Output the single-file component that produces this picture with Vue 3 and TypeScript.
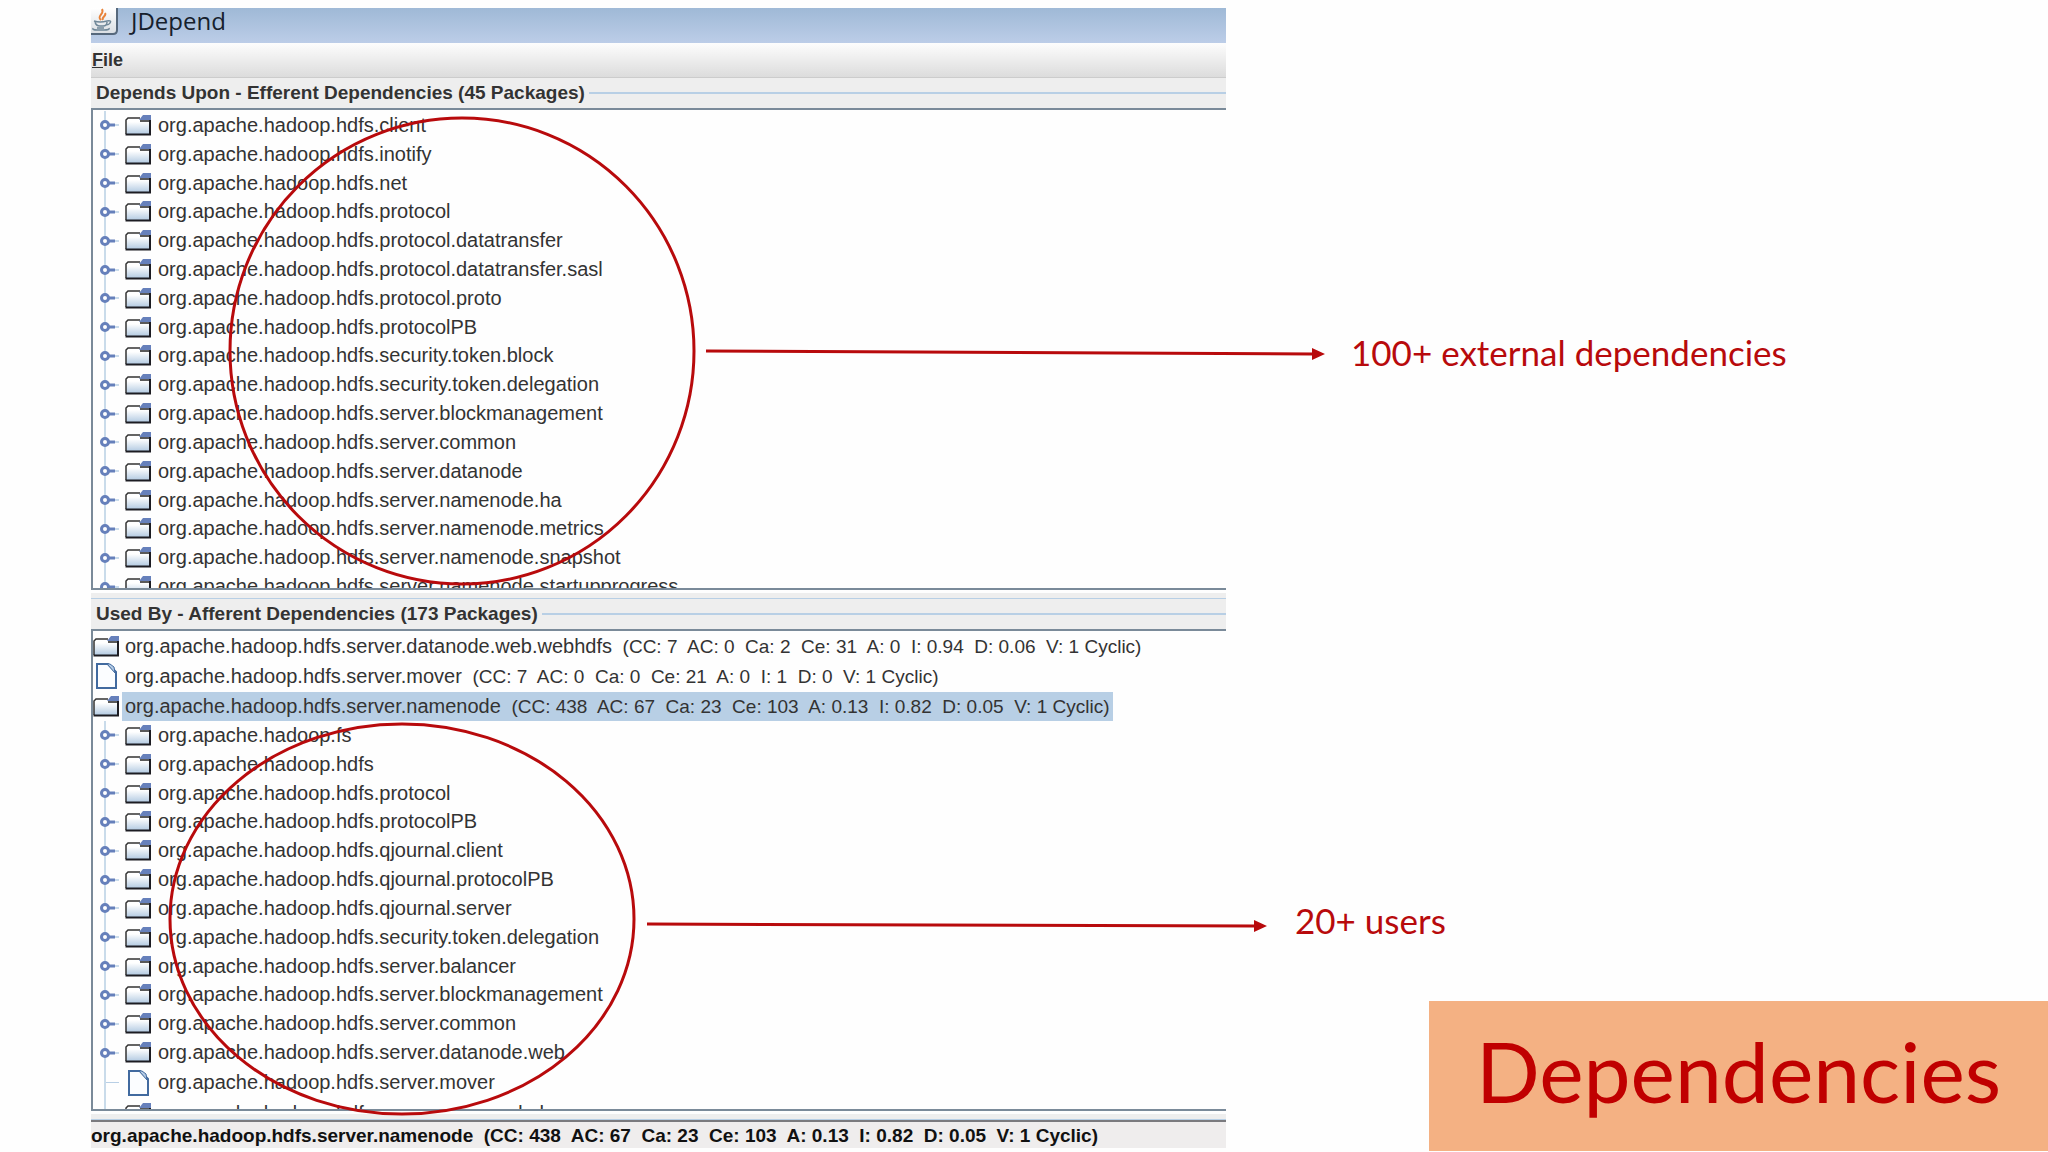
<script setup lang="ts">
interface TreeRow {
  name: string
  kind: 'folder' | 'file'
}

interface PackageRow extends TreeRow {
  metrics: string
}

const prefix = 'org.apache.hadoop.'

const folders = (names: string[]): TreeRow[] =>
  names.map((n) => ({ name: prefix + n, kind: 'folder' }))

const efferent: TreeRow[] = folders([
  'hdfs.client',
  'hdfs.inotify',
  'hdfs.net',
  'hdfs.protocol',
  'hdfs.protocol.datatransfer',
  'hdfs.protocol.datatransfer.sasl',
  'hdfs.protocol.proto',
  'hdfs.protocolPB',
  'hdfs.security.token.block',
  'hdfs.security.token.delegation',
  'hdfs.server.blockmanagement',
  'hdfs.server.common',
  'hdfs.server.datanode',
  'hdfs.server.namenode.ha',
  'hdfs.server.namenode.metrics',
  'hdfs.server.namenode.snapshot',
  'hdfs.server.namenode.startupprogress',
])

const selected: PackageRow = {
  name: prefix + 'hdfs.server.namenode',
  metrics: '  (CC: 438  AC: 67  Ca: 23  Ce: 103  A: 0.13  I: 0.82  D: 0.05  V: 1 Cyclic)',
  kind: 'folder',
}

const packages: PackageRow[] = [
  {
    name: prefix + 'hdfs.server.datanode.web.webhdfs',
    metrics: '  (CC: 7  AC: 0  Ca: 2  Ce: 31  A: 0  I: 0.94  D: 0.06  V: 1 Cyclic)',
    kind: 'folder',
  },
  {
    name: prefix + 'hdfs.server.mover',
    metrics: '  (CC: 7  AC: 0  Ca: 0  Ce: 21  A: 0  I: 1  D: 0  V: 1 Cyclic)',
    kind: 'file',
  },
  selected,
]

const afferent: TreeRow[] = folders([
  'fs',
  'hdfs',
  'hdfs.protocol',
  'hdfs.protocolPB',
  'hdfs.qjournal.client',
  'hdfs.qjournal.protocolPB',
  'hdfs.qjournal.server',
  'hdfs.security.token.delegation',
  'hdfs.server.balancer',
  'hdfs.server.blockmanagement',
  'hdfs.server.common',
  'hdfs.server.datanode.web',
])

const afferentTail: TreeRow[] = [
  { name: prefix + 'hdfs.server.mover', kind: 'file' },
  { name: prefix + 'hdfs.server.namenode.ha', kind: 'folder' },
]
</script>

<template>
  <main class="slide">
    <svg width="0" height="0" class="defs" aria-hidden="true">
      <defs>
        <linearGradient id="folder-fill" x1="0" y1="0" x2="0" y2="1">
          <stop offset="0.25" stop-color="#ffffff" />
          <stop offset="1" stop-color="#b4cbe2" />
        </linearGradient>
        <linearGradient id="java-tile" x1="0" y1="0" x2="0" y2="1">
          <stop offset="0" stop-color="#ffffff" />
          <stop offset="1" stop-color="#d9dee3" />
        </linearGradient>
        <symbol id="folder" viewBox="0 0 26 21">
          <path d="M1 19V5L3 3H16V6H25V19Z" fill="url(#folder-fill)" />
          <path d="M1 19V5L3 3H15" fill="none" stroke="#333" stroke-width="1.500" />
          <path d="M15 6H25" stroke="#222" stroke-width="1.500" />
          <path d="M14 5L18 0H26V5Z" fill="#6680bb" />
          <path d="M25 5V19.500H0.500" fill="none" stroke="#1c1c22" stroke-width="2" />
        </symbol>
        <symbol id="file" viewBox="0 0 26 26">
          <path d="M4 1H15L23 9V25H4Z" fill="#fbfdff" stroke="#416a9f" stroke-width="2" />
          <path d="M14 1L22 10L21 4L17 1Z" fill="#b5cbe4" stroke="#416a9f" stroke-width="1" />
        </symbol>
        <symbol id="knob" viewBox="0 0 20 12">
          <path d="M9 6H16" stroke="#6680bb" stroke-width="3" />
          <path d="M16 6H20" stroke="#b8cfe5" stroke-width="1.500" />
          <circle cx="6" cy="6" r="3.500" fill="#fff" stroke="#6680bb" stroke-width="3" />
        </symbol>
      </defs>
    </svg>

    <section class="window">
      <header class="titlebar">
        <svg class="java" viewBox="0 0 28 28" aria-hidden="true">
          <path d="M0 0H26V22Q26 26 22 26H0Z" fill="url(#java-tile)" />
          <path d="M0 26H22Q26 26 26 22V0" fill="none" stroke="#56687c" stroke-width="2" />
          <path d="M10 12C5 8 14 6 11 1M12 12C10 9 16 8 14 5" fill="none" stroke="#e8833a" stroke-width="2" />
          <path d="M3 13Q9 15 16 13M4 14Q5 18 9 18H12Q16 18 16 14M16 13Q21 12 19 15Q18 17 15 17M2 20Q1 22 6 22H13Q19 22 18 20M6 20H13" fill="none" stroke="#6f8798" stroke-width="1.500" />
        </svg>
        <h1>JDepend</h1>
      </header>
      <nav class="menubar">
        <button type="button"><u>F</u>ile</button>
      </nav>

      <h2 class="group-title"><span>Depends Upon - Efferent Dependencies (45 Packages)</span></h2>
      <div class="pane upper-pane">
        <ul class="tree nested upper">
          <li v-for="row in efferent" :key="row.name">
            <svg class="knob"><use href="#knob" /></svg>
            <svg class="folder"><use href="#folder" /></svg>
            <span>{{ row.name }}</span>
          </li>
        </ul>
      </div>

      <div class="divider"></div>
      <h2 class="group-title"><span>Used By - Afferent Dependencies (173 Packages)</span></h2>
      <div class="pane">
        <ul class="tree roots">
          <li v-for="row in packages" :key="row.name" :class="{ selected: row === selected }">
            <svg :class="row.kind"><use :href="'#' + row.kind" /></svg>
            <span class="label">{{ row.name }}<span class="metrics">{{ row.metrics }}</span></span>
          </li>
        </ul>
        <ul class="tree nested lower">
          <li v-for="row in afferent" :key="row.name">
            <svg class="knob"><use href="#knob" /></svg>
            <svg class="folder"><use href="#folder" /></svg>
            <span>{{ row.name }}</span>
          </li>
        </ul>
        <ul class="tree nested tail">
          <li v-for="row in afferentTail" :key="row.name">
            <svg v-if="row.kind === 'folder'" class="knob"><use href="#knob" /></svg>
            <i v-else class="branch"></i>
            <svg :class="row.kind"><use :href="'#' + row.kind" /></svg>
            <span>{{ row.name }}</span>
          </li>
        </ul>
      </div>
      <div class="divider"></div>
      <footer class="status">{{ selected.name + selected.metrics }}</footer>
    </section>

    <aside class="notes">
      <p class="note external">100+ external dependencies</p>
      <p class="note users">20+ users</p>
      <h2 class="banner">Dependencies</h2>
    </aside>

    <svg class="ink" aria-hidden="true">
      <g fill="none" stroke="#b80a0c" stroke-width="3">
        <ellipse cx="462" cy="351" rx="232" ry="233" />
        <ellipse cx="402" cy="919" rx="232" ry="195" />
        <path d="M706 351L1314 354M647 924L1256 926" />
      </g>
      <path d="M1312 348L1325 354L1312 360ZM1254 920L1267 926L1254 932Z" fill="#b80a0c" />
    </svg>
  </main>
</template>

<style>
body {
  margin: 0;
  background: #fefefe;
}
</style>

<style scoped>
.slide {
  position: relative;
  display: flex;
  box-sizing: border-box;
  min-height: 100vh;
  padding: 8px 0 0 91px;
  overflow: hidden;
  font-family: "Liberation Sans", Arial, sans-serif;
  color: #333;
}
.defs {
  position: absolute;
}
h1, h2, p, ul {
  margin: 0;
  padding: 0;
}
.window {
  flex: 1135 1 0;
  min-width: 0;
}
.titlebar {
  display: flex;
  align-items: flex-start;
  gap: 12px;
  height: 35px;
  background: linear-gradient(#9fb9d6, #bccde8);
}
.java {
  width: 28px;
  height: 28px;
}
h1 {
  font: 400 24px/26px "Open Sans", "Noto Sans", sans-serif;
  color: #16202c;
}
.menubar {
  height: 34px;
  border-bottom: 1px solid #ccc;
  background: linear-gradient(#fdfdfd, #dcdcdc);
}
.menubar button {
  height: 34px;
  padding: 0 1px;
  border: 0;
  background: none;
  font: 700 18px/34px "Liberation Sans", Arial, sans-serif;
  color: #333;
}
.group-title {
  display: flex;
  align-items: center;
  gap: 4px;
  height: 30px;
  padding-left: 5px;
  background: #eee;
  font-size: 19px;
  line-height: 30px;
  white-space: nowrap;
}
.group-title::after {
  content: "";
  flex: 1;
  height: 2px;
  background: #b8cfe5;
}
.pane {
  box-sizing: border-box;
  height: 482px;
  border: solid #7a8a99;
  border-width: 2px 0 2px 2px;
  background: #fefefe;
  overflow: hidden;
}
.upper-pane {
  padding-top: 1px;
}
.divider {
  height: 5px;
  border-top: 3px solid #fefefe;
  border-bottom: 1px solid #b8cfe5;
  background: #eee;
}
.tree {
  display: grid;
  grid-auto-rows: 1fr;
  list-style: none;
  font-size: 20px;
  white-space: pre;
}
.tree li {
  display: flex;
  align-items: center;
  min-height: 0;
}
.tree svg {
  flex: none;
}
.nested {
  margin-left: 11px;
  border-left: 2px solid #c9dbea;
}
.upper {
  height: 490px;
}
.lower {
  height: 346px;
}
.tail {
  height: 62px;
}
.roots {
  height: 90px;
}
.knob {
  width: 20px;
  height: 12px;
  margin-left: -7px;
}
.branch {
  width: 13px;
  height: 1px;
  background: #b8cfe5;
}
.folder,
.file {
  width: 26px;
  height: 21px;
}
.file {
  height: 26px;
}
.nested .folder,
.nested .file {
  margin: 0 7px 0 6px;
}
.label {
  margin-left: 3px;
  padding: 0 3px;
  line-height: 28px;
}
.metrics {
  font-size: 19px;
}
.selected .label {
  background: #b8cfe5;
}
.status {
  height: 26px;
  border-top: 2px solid #7a7a7e;
  background: #efeded;
  font-size: 19px;
  font-weight: 700;
  line-height: 28px;
  white-space: pre;
  color: #111;
}
.notes {
  display: flex;
  flex: 822 1 0;
  flex-direction: column;
  min-width: 0;
  font-family: Lato, Carlito, sans-serif;
  color: #b80a0c;
}
.note {
  font-size: 35px;
  line-height: 40px;
  white-space: nowrap;
}
.external {
  margin: 324px 0 0 125px;
}
.users {
  margin: 528px 0 0 69px;
}
.banner {
  height: 150px;
  margin: 61px 0 0 203px;
  background: #f4b183;
  font-size: 84px;
  font-weight: 400;
  line-height: 140px;
  text-align: center;
  color: #c00000;
}
.ink {
  position: absolute;
  top: 0;
  left: 0;
  width: 100%;
  height: 100%;
  pointer-events: none;
}
</style>
